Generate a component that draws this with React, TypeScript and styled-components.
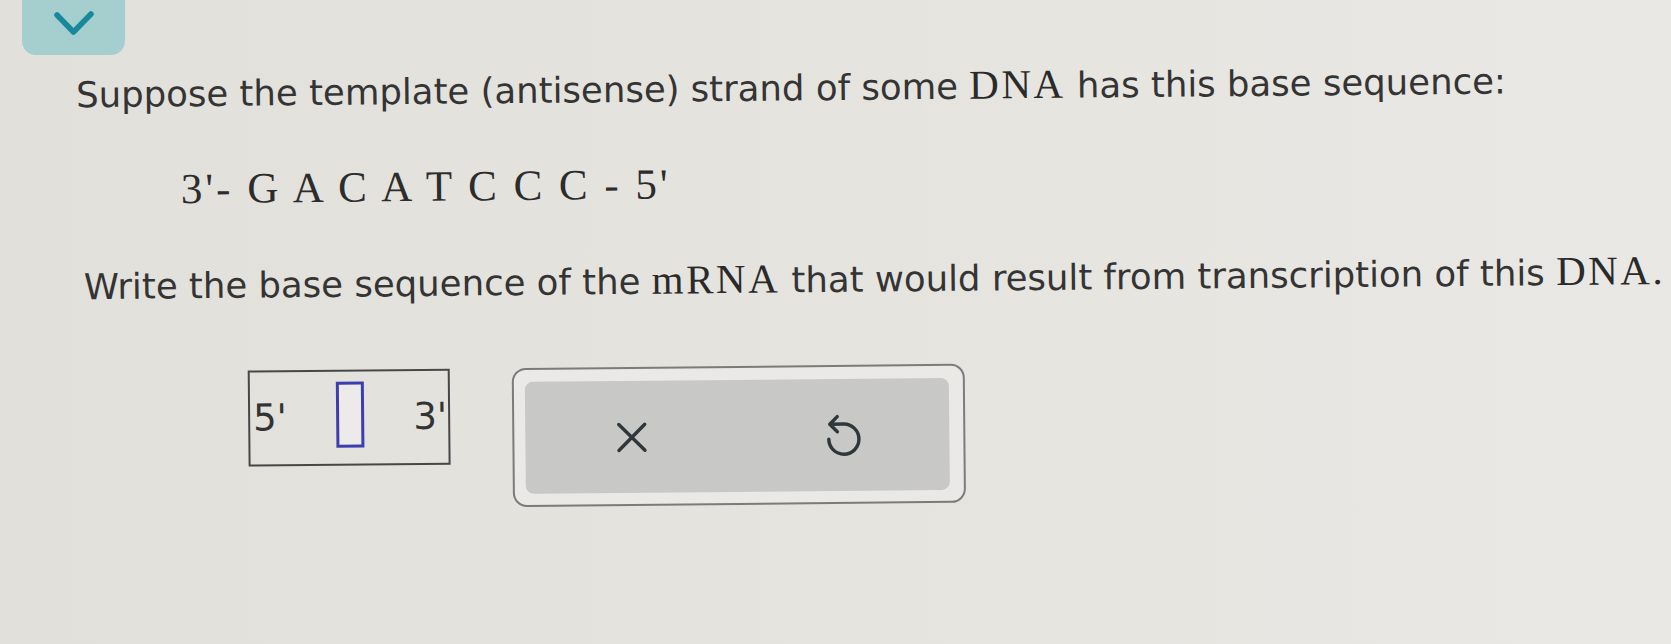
import React from "react";
import styled, { createGlobalStyle } from "styled-components";

const GlobalStyle = createGlobalStyle`
  html, body {
    margin: 0;
    padding: 0;
  }
  body {
    width: 1671px;
    height: 644px;
    overflow: hidden;
    background: #e4e3de;
    font-family: "DejaVu Sans", Verdana, sans-serif;
    color: #353535;
  }
`;

const Page = styled.div`
  width: 1671px;
  height: 644px;
  display: flex;
  flex-direction: column;
  background: linear-gradient(90deg, #e1e0db 0%, #e5e4df 55%, #e9e8e4 100%);
`;

const Header = styled.div`
  display: flex;
  padding-left: 22px;
`;

const ToggleButton = styled.button`
  width: 103px;
  height: 55px;
  border: none;
  border-radius: 0 0 14px 14px;
  background: #a5cfcf;
  display: flex;
  align-items: center;
  justify-content: center;
  padding: 0 0 9px;
  cursor: pointer;
`;

const Content = styled.div`
  display: flex;
  flex-direction: column;
  padding-left: 78px;
  transform: rotate(-0.55deg);
  transform-origin: 830px 240px;
`;

const Prompt = styled.p<{ $top: number; $indent?: number }>`
  margin: ${(p) => p.$top}px 0 0 ${(p) => p.$indent ?? 0}px;
  font-size: 35.5px;
  line-height: 42px;
  white-space: nowrap;
  color: #343434;
`;

const Serif = styled.span`
  font-family: "Liberation Serif", "Times New Roman", serif;
  font-size: 41px;
  line-height: 42px;
  letter-spacing: 2.5px;
  color: #2a2a2a;
`;

const Sequence = styled.div`
  margin: 50px 0 0 104px;
  font-family: "Liberation Serif", "Times New Roman", serif;
  font-size: 43px;
  line-height: 48px;
  letter-spacing: 3px;
  white-space: pre;
  color: #2c2c2c;
`;

const AnswerRow = styled.div`
  display: flex;
  align-items: flex-start;
  gap: 62px;
  margin: 64px 0 0 169px;
`;

const StrandBox = styled.div`
  box-sizing: border-box;
  width: 202px;
  height: 96px;
  border: 2px solid #474747;
  display: flex;
  align-items: center;
  justify-content: space-between;
  padding: 0 1px 0 3px;
`;

const EndLabel = styled.span`
  font-size: 37px;
  line-height: 42px;
  color: #333333;
`;

const BlankInput = styled.div`
  box-sizing: border-box;
  width: 28px;
  height: 66px;
  margin-top: -6px;
  border: 3px solid #3c3daf;
  background: #ecebea;
`;

const ToolFrame = styled.div`
  box-sizing: border-box;
  width: 453px;
  height: 139px;
  border: 2px solid #7b7b7b;
  border-radius: 14px;
  padding: 12px 14px 11px 11px;
  background: #eae9e5;
`;

const ToolBar = styled.div`
  display: flex;
  height: 100%;
  background: #c8c9c6;
  border-radius: 8px;
`;

const ToolButton = styled.button`
  flex: 1;
  display: flex;
  align-items: center;
  justify-content: center;
  border: none;
  background: transparent;
  padding: 0;
  cursor: pointer;
`;

const Chevron = () => (
  <svg width="40" height="26" viewBox="0 0 40 26">
    <polyline
      points="3,5 19.5,22 37,4"
      fill="none"
      stroke="#17899a"
      strokeWidth="5.5"
      strokeLinecap="round"
      strokeLinejoin="round"
    />
  </svg>
);

const ClearIcon = () => (
  <svg width="31" height="31" viewBox="0 0 31 31">
    <path
      d="M2.5 2.5 L28.5 28.5 M28.5 2.5 L2.5 28.5"
      stroke="#30373a"
      strokeWidth="3.4"
      strokeLinecap="round"
      fill="none"
    />
  </svg>
);

const UndoIcon = () => (
  <svg width="37" height="43" viewBox="11 8.5 34 40">
    <path
      d="M22 11 L15 18 L22 25 M15 18 L28 18 A14 14 0 1 1 14 32"
      stroke="#30373a"
      strokeWidth="3.2"
      strokeLinecap="round"
      strokeLinejoin="round"
      fill="none"
    />
  </svg>
);

export default function App() {
  return (
    <>
      <GlobalStyle />
      <Page>
        <Header>
          <ToggleButton aria-label="Collapse">
            <Chevron />
          </ToggleButton>
        </Header>
        <Content>
          <Prompt $top={10}>
            Suppose the template (antisense) strand of some <Serif>DNA</Serif> has this base sequence:
          </Prompt>
          <Sequence>3'- G A C A T C C C - 5'</Sequence>
          <Prompt $top={50} $indent={6}>
            Write the base sequence of the <Serif>mRNA</Serif> that would result from transcription of this{" "}
            <Serif>DNA.</Serif>
          </Prompt>
          <AnswerRow>
            <StrandBox>
              <EndLabel>5'</EndLabel>
              <BlankInput />
              <EndLabel>3'</EndLabel>
            </StrandBox>
            <ToolFrame>
              <ToolBar>
                <ToolButton aria-label="Clear">
                  <ClearIcon />
                </ToolButton>
                <ToolButton aria-label="Undo">
                  <UndoIcon />
                </ToolButton>
              </ToolBar>
            </ToolFrame>
          </AnswerRow>
        </Content>
      </Page>
    </>
  );
}
